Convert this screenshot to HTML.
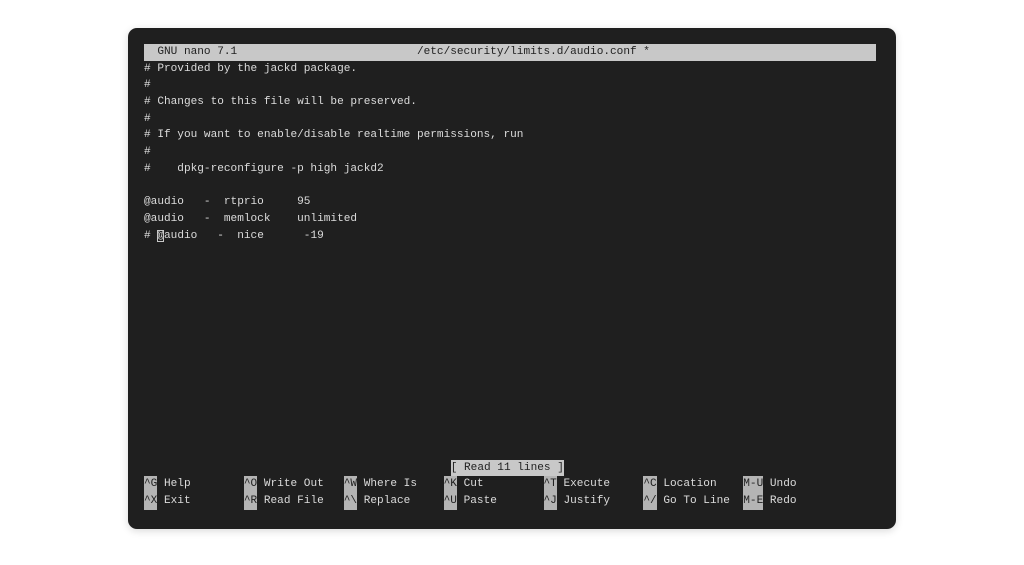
<!DOCTYPE html>
<html><head><style>
body{margin:0;width:1024px;height:565px;background:#fff;position:relative;overflow:hidden}
#t{position:absolute;left:128px;top:28px;width:768px;height:501px;background:#1f1f1f;border-radius:9px;box-shadow:0 2px 8px rgba(0,0,0,.15)}
.l{position:absolute;left:144px;font:11.1px/16.7px "Liberation Mono",monospace;color:#dcdcdc;white-space:pre;height:16.7px}
.k{background:#b4b4b4;color:#1f1f1f;display:inline-block;height:16.7px;vertical-align:top}
.cur{outline:1px solid #c8c8c8;outline-offset:-1px}
</style></head><body>
<div id="t"></div>
<div class="l" style="top:44px;width:732px;background:#c8c8c8;color:#1f1f1f">  GNU nano 7.1                           /etc/security/limits.d/audio.conf *</div>
<div class="l" style="top:60.5px"># Provided by the jackd package.</div>
<div class="l" style="top:77.2px">#</div>
<div class="l" style="top:93.9px"># Changes to this file will be preserved.</div>
<div class="l" style="top:110.6px">#</div>
<div class="l" style="top:127.3px"># If you want to enable/disable realtime permissions, run</div>
<div class="l" style="top:144px">#</div>
<div class="l" style="top:160.7px">#    dpkg-reconfigure -p high jackd2</div>
<div class="l" style="top:194.1px">@audio   -  rtprio     95</div>
<div class="l" style="top:210.8px">@audio   -  memlock    unlimited</div>
<div class="l" style="top:227.5px"># <span class="cur">@</span>audio   -  nice      -19</div>
<div class="l" style="top:459.5px;left:450.7px;background:#c8c8c8;color:#1f1f1f">[ Read 11 lines ]</div>
<div class="l" style="top:476.2px"><span class="k">^G</span> Help        <span class="k">^O</span> Write Out   <span class="k">^W</span> Where Is    <span class="k">^K</span> Cut         <span class="k">^T</span> Execute     <span class="k">^C</span> Location    <span class="k">M-U</span> Undo</div>
<div class="l" style="top:492.9px"><span class="k">^X</span> Exit        <span class="k">^R</span> Read File   <span class="k">^\</span> Replace     <span class="k">^U</span> Paste       <span class="k">^J</span> Justify     <span class="k">^/</span> Go To Line  <span class="k">M-E</span> Redo</div>
</body></html>
